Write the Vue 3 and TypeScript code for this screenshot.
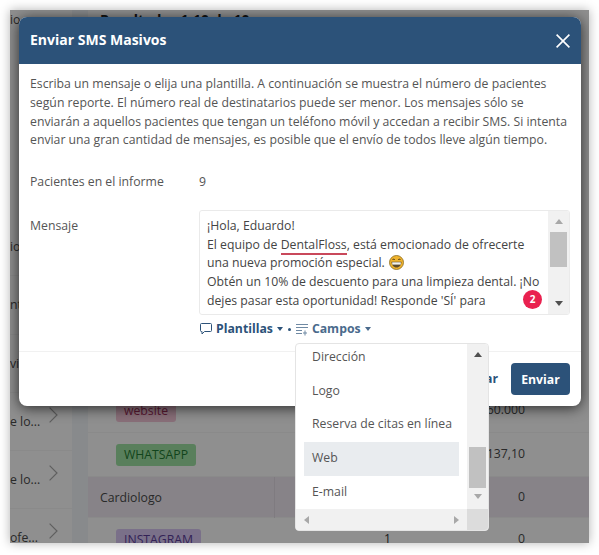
<script setup lang="ts">
interface Row {
  tag?: string
  tagClass?: string
  name?: string
  qty?: string
  amount: string
}

const sideItems = ['io', 'nt', 'vi', 'e lo...', 'e lo...', 'ofe...']

const rows: Row[] = [
  { tag: 'website', tagClass: 'pink', amount: '60.000' },
  { tag: 'WHATSAPP', tagClass: 'green', amount: '137,10' },
  { name: 'Cardiologo', amount: '0' },
  { tag: 'INSTAGRAM', tagClass: 'purple', qty: '1', amount: '0' }
]

const fields = ['Dirección', 'Logo', 'Reserva de citas en línea', 'Web', 'E-mail']
</script>

<template>
  <div class="stage">
    <div class="page">
      <aside class="side">
        <div class="side-top">io</div>
        <div v-for="(item, i) in sideItems" :key="i" class="side-item" :class="{ clipped: i < 3 }">
          <span>{{ item }}</span>
          <svg v-if="i > 2" class="chev" width="9" height="16" viewBox="0 0 9 16">
            <path d="M.6.6l7.400 7.400L.6 15.400" fill="none" stroke="currentColor" stroke-width="1.200" />
          </svg>
        </div>
      </aside>
      <main class="results">
        <h2>Resultados 1-10 de 10</h2>
        <div class="rows">
          <div v-for="(row, i) in rows" :key="i" class="row" :class="{ group: row.name }">
            <div class="cell-main">
              <span v-if="row.tag" class="tag" :class="row.tagClass">{{ row.tag }}</span>
              <template v-else>{{ row.name }}</template>
            </div>
            <div class="cell-qty">{{ row.qty }}</div>
            <div class="cell-amount">{{ row.amount }}</div>
          </div>
        </div>
      </main>
    </div>
    <div class="overlay"></div>

    <section class="modal">
      <header class="modal-head">
        <h1>Enviar SMS Masivos</h1>
        <svg width="14" height="14" viewBox="0 0 14 14">
          <path d="M.6.6l12.800 12.800M13.400.6L.6 13.400" stroke="#fff" stroke-width="1.600" fill="none" />
        </svg>
      </header>
      <div class="modal-body">
        <p class="intro">
          Escriba un mensaje o elija una plantilla. A continuación se muestra el número de pacientes según reporte. El número real de destinatarios puede ser menor. Los mensajes sólo se enviarán a aquellos pacientes que tengan un teléfono móvil y accedan a recibir SMS. Si intenta enviar una gran cantidad de mensajes, es posible que el envío de todos lleve algún tiempo.
        </p>
        <div class="form-row count-row">
          <label>Pacientes en el informe</label>
          <span>9</span>
        </div>
        <div class="form-row msg-row">
          <label>Mensaje</label>
          <div class="msg-col">
            <div class="msg-box">
              <div class="msg-text">
                ¡Hola, Eduardo!<br />
                El equipo de <span class="spell">DentalFloss</span>, está emocionado de ofrecerte una nueva promoción especial.
                <svg class="emoji" width="15" height="15" viewBox="0 0 15 15">
                  <circle cx="7.500" cy="7.500" r="7" fill="#f0b42e" stroke="#8a6a1c" stroke-width=".8" />
                  <path d="M2.500 6.800h10c0 3.200-2.100 5.800-5 5.800s-5-2.600-5-5.800z" fill="#5e4c2c" />
                  <path d="M3.200 7.300h8.600v2.300H3.200z" fill="#f4f4f0" />
                  <path d="M3.300 5c.7-1.100 2-1.100 2.700 0M9 5c.7-1.100 2-1.100 2.700 0" stroke="#4d3a18" stroke-width="1" fill="none" />
                </svg><br />
                Obtén un 10% de descuento para una limpieza dental. ¡No dejes pasar esta oportunidad! Responde 'SÍ' para<br />
                acceder a esta promoción limitada
              </div>
              <span class="count-badge">2</span>
              <div class="vscroll">
                <i class="arrow up"></i>
                <div class="track"><div class="thumb msg-thumb"></div></div>
                <i class="arrow down dark"></i>
              </div>
            </div>
            <div class="msg-tools">
              <svg width="12" height="12" viewBox="0 0 12 12">
                <path d="M1.500.5h9a1 1 0 0 1 1 1v6a1 1 0 0 1-1 1H4.500L2 11V8.500h-.5a1 1 0 0 1-1-1v-6a1 1 0 0 1 1-1z" fill="none" stroke="#2c5279" stroke-width="1" />
              </svg>
              <b class="tool-a">Plantillas</b><i class="caret"></i>
              <span class="dot"></span>
              <svg width="12" height="13" viewBox="0 0 12 13">
                <path d="M0 1.500h12M0 4.500h12M0 7.500h6M0 10.500h6M9 7.500v5M7 10h4" fill="none" stroke="#6f89a3" stroke-width="1" />
              </svg>
              <b class="tool-b">Campos</b><i class="caret light"></i>
            </div>
          </div>
        </div>
      </div>
      <footer class="modal-foot">
        <a class="cancel">Cancelar</a>
        <button class="send">Enviar</button>
      </footer>
    </section>

    <div class="menu">
      <div class="menu-top">
        <ul class="menu-list">
          <li v-for="f in fields" :key="f" :class="{ active: f === 'Web' }">{{ f }}</li>
        </ul>
        <div class="vscroll menu-v">
          <i class="arrow up dark"></i>
          <div class="track"><div class="thumb menu-thumb"></div></div>
          <i class="arrow down"></i>
        </div>
      </div>
      <div class="menu-bottom">
        <div class="hscroll">
          <i class="arrow left"></i>
          <i class="arrow right"></i>
        </div>
        <div class="corner"></div>
      </div>
    </div>
  </div>
</template>

<style>
html, body { background: #fff; }
</style>

<style scoped>
* { box-sizing: border-box; }
.stage {
  position: relative;
  width: 579px;
  height: 533px;
  margin: 10px;
  overflow: hidden;
  font: 12.250px/18.750px "Open Sans", "Noto Sans", sans-serif;
  color: #4a4a4a;
  box-shadow: 0 0 10px rgba(0, 0, 0, .3);
}
.page {
  display: flex;
  height: 100%;
  background: #fff;
}
.side {
  flex: 0 0 62px;
  min-width: 0;
  white-space: nowrap;
}
.side-top {
  height: 208px;
  padding-top: 1px;
}
.side-item {
  position: relative;
  height: 58.300px;
  padding: 20px 37px 0 0;
  border-bottom: 1px solid #f6f6f6;
  text-align: right;
}
.side-item.clipped {
  padding-right: 0;
  text-align: left;
}
.chev {
  position: absolute;
  left: 39px;
  top: 14px;
  color: #aaa;
}
.results {
  flex: 1;
  min-width: 0;
  margin-left: 16px;
  box-shadow: -16px 0 0 #f3f7fa;
}
.results h2 {
  height: 379px;
  margin: 0;
  padding-left: 12px;
  font-size: 14px;
  line-height: 19px;
  color: #222;
}
.row {
  display: flex;
  align-items: center;
  height: 44px;
  border-bottom: 1px solid #f6f6f6;
}
.row.group {
  height: 41px;
  background: #f0eaf2;
}
.cell-main { flex: 0 0 187px; padding-left: 28px; }
.row.group .cell-main {
  padding-left: 12px;
  border-right: 1px solid #e2dbe5;
  line-height: 41px;
}
.cell-qty { flex: 0 0 116px; text-align: right; color: #333; }
.cell-amount { flex: 0 0 134px; text-align: right; }
.tag {
  display: inline-block;
  height: 22px;
  padding: 0 8px;
  border-radius: 3px;
  line-height: 21px;
}
.tag.pink { background: #f4c6d8; color: #a02c58; }
.tag.green { background: #9fe3a4; color: #1f7a32; }
.tag.purple { background: #d9c8f5; color: #5c3c9a; }
.overlay {
  position: absolute;
  inset: 0;
  background: rgba(0, 0, 0, .44);
}
.modal {
  position: absolute;
  left: 9px;
  top: 7px;
  width: 562px;
  height: 389px;
  display: flex;
  flex-direction: column;
  background: #fff;
  border-radius: 8px;
  box-shadow: 0 2px 14px rgba(0, 0, 0, .7);
  overflow: hidden;
}
.modal-head {
  flex: 0 0 47px;
  display: flex;
  align-items: center;
  justify-content: space-between;
  padding: 0 11px;
  background: #2c5279;
}
.modal-head h1 {
  margin: 0;
  font-size: 14px;
  font-weight: 700;
  color: #fff;
}
.modal-body {
  flex: 1;
  min-height: 0;
  padding: 11px 11px 0;
}
.intro {
  margin: 0;
  color: #555;
}
.form-row {
  display: flex;
  color: #555;
}
.form-row label { flex: 0 0 169px; }
.count-row { margin-top: 23px; }
.msg-row { margin-top: 18px; }
.msg-row label { padding-top: 7px; }
.msg-col { width: 371px; }
.msg-box {
  position: relative;
  display: flex;
  height: 105px;
  border: 1px solid #eaeaea;
  border-radius: 3px;
  overflow: hidden;
}
.msg-text {
  flex: 1;
  padding: 6px 7px;
  color: #444;
}
.spell {
  border-bottom: 2px solid #c9485b;
}
.emoji {
  margin-left: 1px;
  vertical-align: -3px;
}
.count-badge {
  position: absolute;
  left: 323px;
  top: 79px;
  width: 19px;
  height: 19px;
  border-radius: 50%;
  background: #e9214f;
  color: #fff;
  font-size: 10px;
  font-weight: 700;
  line-height: 19px;
  text-align: center;
}
.vscroll {
  flex: 0 0 21px;
  display: flex;
  flex-direction: column;
  align-items: center;
  padding: 8px 0 10px;
  background: #f1f1f1;
}
.msg-box .vscroll { padding-bottom: 8px; }
.track {
  flex: 1;
  width: 100%;
  padding: 0 2px;
}
.thumb { background: #c1c1c1; }
.msg-thumb { height: 35px; margin-top: 8px; }
.menu-thumb { height: 41px; margin-top: 90px; }
.arrow {
  display: block;
  width: 0;
  height: 0;
  border-style: solid;
  border-color: transparent;
}
.arrow.up { border-width: 0 4.500px 5px; border-bottom-color: #a8a8a8; }
.arrow.up.dark { border-bottom-color: #505050; }
.arrow.down { border-width: 5px 4.500px 0; border-top-color: #a8a8a8; }
.arrow.down.dark { border-top-color: #505050; }
.arrow.left { border-width: 4.500px 5px 4.500px 0; border-right-color: #a8a8a8; }
.arrow.right { border-width: 4.500px 0 4.500px 5px; border-left-color: #a8a8a8; }
.msg-tools {
  display: flex;
  align-items: center;
  height: 19px;
  margin: 5px 0 0 1px;
  font-size: 12.250px;
}
.tool-a { margin-left: 4px; color: #2c5279; }
.tool-b { margin-left: 4px; color: #4a6a8c; }
.caret {
  width: 0;
  height: 0;
  margin-left: 4px;
  border-style: solid;
  border-width: 4px 3px 0;
  border-color: #2c5279 transparent transparent;
}
.caret.light { border-top-color: #4a6a8c; }
.dot {
  width: 3px;
  height: 3px;
  margin: 0 5px 0 5px;
  border-radius: 50%;
  background: #2c5279;
}
.modal-foot {
  flex: 0 0 55px;
  display: flex;
  align-items: center;
  justify-content: flex-end;
  gap: 13px;
  padding: 0 11px;
  border-top: 1px solid #f1f1f1;
}
.cancel {
  font-weight: 700;
  color: #2c5279;
}
.send {
  width: 59px;
  height: 32px;
  padding: 0;
  border: 0;
  border-radius: 4px;
  background: #2c5279;
  color: #fff;
  font: 700 12.250px "Open Sans", "Noto Sans", sans-serif;
}
.menu {
  position: absolute;
  left: 285px;
  top: 333px;
  width: 194px;
  height: 188px;
  display: flex;
  flex-direction: column;
  background: #fff;
  border: 1px solid #e4e4e4;
  border-radius: 4px;
  overflow: hidden;
}
.menu-top {
  flex: 1;
  display: flex;
  min-height: 0;
}
.menu-list {
  flex: 1;
  margin: -3px 0 0;
  padding: 0 8px;
  list-style: none;
  color: #555;
}
.menu-list li {
  height: 33.700px;
  padding-left: 8px;
  line-height: 32px;
  white-space: nowrap;
}
.menu-list li.active { background: #e9ecef; }
.menu-bottom {
  flex: 0 0 21px;
  display: flex;
}
.hscroll {
  flex: 1;
  display: flex;
  align-items: center;
  justify-content: space-between;
  padding: 0 8px;
  background: #f1f1f1;
}
.corner {
  flex: 0 0 21px;
  background: #dcdcdc;
}
</style>
